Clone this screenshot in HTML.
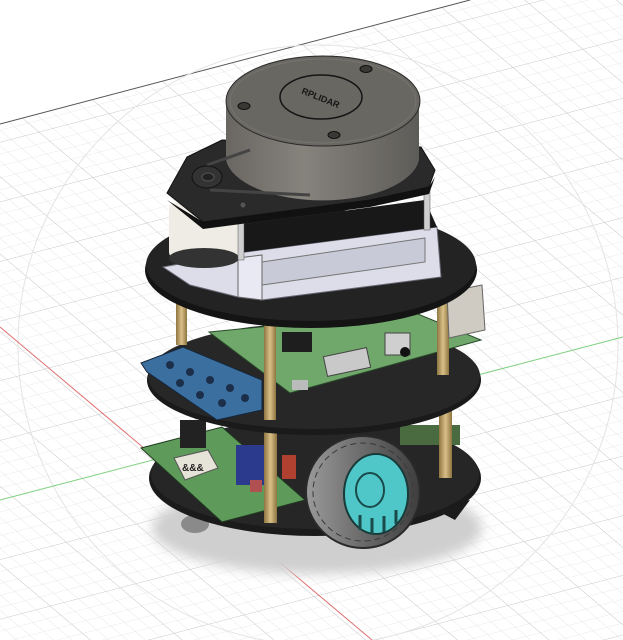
<!DOCTYPE html>
<html><head><meta charset="utf-8"><style>
html,body{margin:0;padding:0;background:#fff;width:623px;height:640px;overflow:hidden}
svg{display:block}
</style></head><body>
<svg width="623" height="640" viewBox="0 0 623 640" xmlns="http://www.w3.org/2000/svg">
<defs>
<pattern id="minor" width="14" height="14" patternUnits="userSpaceOnUse" patternTransform="matrix(1,-0.262,0.77,0.65,152,460)">
<path d="M0 0H14M0 0V14" stroke="#dedede" stroke-width="0.8" fill="none"/>
</pattern>
<pattern id="major" width="70" height="70" patternUnits="userSpaceOnUse" patternTransform="matrix(1,-0.262,0.77,0.65,152,460)">
<path d="M0 0H70M0 0V70" stroke="#c6c6c6" stroke-width="1" fill="none"/>
</pattern>
<clipPath id="gc"><polygon points="0,124 470,0 623,0 623,640 0,640"/></clipPath>
<filter id="blur"><feGaussianBlur stdDeviation="6"/></filter>
<linearGradient id="cyl" x1="0" x2="1"><stop offset="0" stop-color="#6a6762"/><stop offset="0.4" stop-color="#86837d"/><stop offset="1" stop-color="#5e5c58"/></linearGradient>
<linearGradient id="gold" x1="0" x2="1"><stop offset="0" stop-color="#8e7440"/><stop offset="0.5" stop-color="#d9c087"/><stop offset="1" stop-color="#8e7440"/></linearGradient>
<linearGradient id="tire" x1="0" x2="1"><stop offset="0" stop-color="#9a9a9a"/><stop offset="0.5" stop-color="#6a6a6a"/><stop offset="1" stop-color="#3e3e3e"/></linearGradient>
</defs>
<g clip-path="url(#gc)">
<rect width="623" height="640" fill="url(#minor)"/>
<rect width="623" height="640" fill="url(#major)"/>
</g>
<line x1="0" y1="124" x2="470" y2="0" stroke="#555" stroke-width="1"/>
<circle cx="318" cy="345" r="300" fill="none" stroke="#e4e4e4" stroke-width="1"/>
<line x1="0" y1="327" x2="372" y2="640" stroke="#e07070" stroke-width="1"/>
<line x1="0" y1="500" x2="623" y2="337" stroke="#80d080" stroke-width="1"/>

<ellipse cx="317" cy="528" rx="165" ry="46" fill="#cfcfcf" filter="url(#blur)"/>
<ellipse cx="195" cy="524" rx="14" ry="9" fill="#8a8a8a"/>

<ellipse cx="315" cy="478" rx="166" ry="58" fill="#1b1b1b"/>
<path d="M420 500 L440 508 L470 500 L455 520 L430 507 Z" fill="#1b1b1b"/>
<ellipse cx="315" cy="474" rx="164" ry="55" fill="#262626"/>
<polygon points="141,448 222,427 305,500 222,522" fill="#5e9a5a" stroke="#1f3a1f" stroke-width="1"/>
<polygon points="174,458 208,450 218,468 185,480" fill="#e6e3d8" stroke="#555"/>
<text x="182" y="471" font-family="Liberation Sans, sans-serif" font-size="10" font-weight="bold" fill="#222">&amp;&amp;&amp;</text>
<rect x="236" y="445" width="30" height="40" fill="#2b3a8c"/>
<rect x="282" y="455" width="14" height="24" fill="#b04030"/>
<rect x="250" y="480" width="12" height="12" fill="#b05050"/>
<rect x="180" y="420" width="26" height="28" fill="#222"/>
<rect x="400" y="425" width="60" height="20" fill="#4a6a40"/>
<rect x="264" y="430" width="13" height="93" fill="url(#gold)"/>
<rect x="439" y="400" width="13" height="78" fill="url(#gold)"/>

<ellipse cx="363" cy="492" rx="57" ry="56" fill="url(#tire)" stroke="#2a2a2a" stroke-width="2"/>
<ellipse cx="363" cy="492" rx="50" ry="49" fill="none" stroke="#3a3a3a" stroke-width="1" stroke-dasharray="6 4"/>
<ellipse cx="376" cy="494" rx="32" ry="40" fill="#4fc7c9" stroke="#1a3a3a" stroke-width="2"/>
<ellipse cx="370" cy="490" rx="14" ry="17" fill="none" stroke="#1a4a4a" stroke-width="2"/>
<path d="M360 515 V530 M372 518 V535 M384 516 V532 M396 510 V524" stroke="#1a4a4a" stroke-width="3"/>

<ellipse cx="314" cy="380" rx="167" ry="55" fill="#1a1a1a"/>
<ellipse cx="314" cy="376" rx="166" ry="53" fill="#272727"/>
<polygon points="209,332 413,312 481,340 290,393" fill="#6fa86a" stroke="#2a4a2a"/>
<rect x="325" y="352" width="44" height="20" fill="#c9c9c9" stroke="#444" transform="rotate(-12 347 362)"/>
<rect x="385" y="333" width="25" height="22" fill="#cfcfcf" stroke="#444"/>
<circle cx="405" cy="352" r="5" fill="#111"/>
<rect x="282" y="332" width="30" height="20" fill="#1e1e1e"/>
<rect x="292" y="380" width="16" height="10" fill="#bbb"/>
<polygon points="141,363 183,347 262,380 262,410 217,420 147,372" fill="#3b6fa0" stroke="#14263a"/>
<g fill="#1c2f4a"><circle cx="170" cy="365" r="4"/><circle cx="190" cy="372" r="4"/><circle cx="210" cy="380" r="4"/><circle cx="230" cy="388" r="4"/><circle cx="200" cy="395" r="4"/><circle cx="222" cy="403" r="4"/><circle cx="245" cy="398" r="4"/><circle cx="180" cy="383" r="4"/></g>
<rect x="176" y="300" width="11" height="45" fill="url(#gold)"/>
<rect x="264" y="300" width="12" height="120" fill="url(#gold)"/>
<rect x="437" y="295" width="12" height="80" fill="url(#gold)"/>
<polygon points="447,292 482,285 485,330 449,338" fill="#cfcbc2" stroke="#666"/>

<ellipse cx="311" cy="270" rx="166" ry="58" fill="#141414"/>
<ellipse cx="311" cy="265" rx="165" ry="56" fill="#232323"/>
<polygon points="163,267 238,253 437,227 441,277 262,300 238,297 190,285" fill="#dcdde8" stroke="#6a6a78"/>
<polygon points="262,262 425,238 425,262 262,285" fill="#c9cad8" stroke="#777"/>
<polygon points="238,258 262,255 262,300 238,297" fill="#e8e9f2" stroke="#666"/>
<polygon points="238,225 425,200 437,227 238,253" fill="#181818"/>
<rect x="169" y="203" width="70" height="55" rx="6" fill="#eeece4"/>
<ellipse cx="204" cy="258" rx="35" ry="10" fill="#333"/>
<rect x="238" y="220" width="6" height="40" fill="#cfcfcf" stroke="#555" stroke-width="0.5"/>
<rect x="424" y="190" width="6" height="40" fill="#cfcfcf" stroke="#555" stroke-width="0.5"/>
<polygon points="167,200 203,229 370,207 429,194 435,177 429,187 370,200 203,222" fill="#111"/>
<polygon points="167,193 187,157 222,140 421,147 435,170 429,187 370,200 203,222" fill="#2a2a2a" stroke="#111"/>
<path d="M226 101 V160 A97 45 0 0 0 419 160 V101 Z" fill="url(#cyl)"/>
<ellipse cx="323" cy="101" rx="97" ry="45" fill="#696762" stroke="#2a2a2a" stroke-width="1"/>
<ellipse cx="323" cy="101" rx="93" ry="42" fill="none" stroke="#77746f" stroke-width="1"/>
<ellipse cx="321" cy="97" rx="41" ry="22" fill="none" stroke="#151515" stroke-width="1.5"/>
<text x="321" y="101" text-anchor="middle" transform="rotate(22 321 97)" font-family="Liberation Sans, sans-serif" font-size="9" font-weight="bold" fill="#151515">RPLIDAR</text>
<ellipse cx="366" cy="69" rx="6" ry="3.5" fill="#3a3835" stroke="#111"/>
<ellipse cx="244" cy="106" rx="6" ry="3.5" fill="#3a3835" stroke="#111"/>
<ellipse cx="334" cy="135" rx="6" ry="3.5" fill="#3a3835" stroke="#111"/>
<path d="M207 165 L250 150 M210 190 L310 195" stroke="#444" stroke-width="3"/>
<ellipse cx="207" cy="177" rx="15" ry="11" fill="#333" stroke="#111"/>
<ellipse cx="208" cy="177" rx="6" ry="4" fill="#222" stroke="#555"/>
<circle cx="243" cy="205" r="2.5" fill="#555"/>
</svg>
</body></html>
